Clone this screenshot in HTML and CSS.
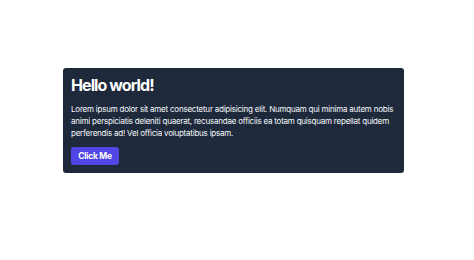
FILE: index.html
```html
<!DOCTYPE html>
<html>
<head>
<meta charset="utf-8">
<link rel="stylesheet" href="styles.css">
</head>
<body>
<div class="page">
  <div class="card">
    <h1 class="title">Hello world!</h1>
    <p class="text">Lorem ipsum dolor sit amet consectetur adipisicing elit. Numquam qui minima autem nobis animi perspiciatis deleniti quaerat, recusandae officiis ea totam quisquam repellat quidem perferendis ad! Vel officia voluptatibus ipsam.</p>
    <button class="btn">Click Me</button>
  </div>
</div>
</body>
</html>
```
FILE: styles.css
```css
html, body { margin: 0; padding: 0; background: #fff; }
body { font-family: Inter, "Noto Sans", sans-serif; }
.page {
  width: 474px;
  height: 260px;
  padding: 68px 0 0 63px;
  box-sizing: border-box;
}
.card {
  width: 341px;
  box-sizing: border-box;
  background: #1e293b;
  border-radius: 3px;
  padding: 7px 8px 8px 8px;
  color: #fff;
}
.title {
  margin: 0;
  font-size: 16px;
  font-weight: 700;
  line-height: 20px;
  letter-spacing: -0.9px;
}
.text {
  margin: 8px 0 8px;
  font-size: 8px;
  line-height: 12px;
  letter-spacing: -0.22px;
  color: #f8fafc;
}
.btn {
  display: block;
  background: #4f46e5;
  color: #fff;
  border: none;
  border-radius: 3px;
  font-family: inherit;
  font-size: 8.5px;
  font-weight: 700;
  letter-spacing: -0.3px;
  padding: 0;
  height: 18px;
  width: 48px;
}
```
